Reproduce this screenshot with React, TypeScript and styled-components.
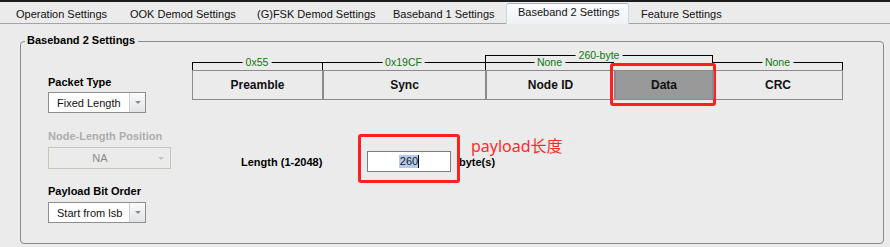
import React from "react";
import styled, { createGlobalStyle, css } from "styled-components";

const GlobalStyle = createGlobalStyle`
  html, body { margin: 0; padding: 0; background: #ebebeb; }
  body { font-family: "Liberation Sans", Arial, sans-serif; font-size: 11px; color: #000; }
  #root { width: 890px; height: 247px; overflow: hidden; }
  * { box-sizing: border-box; }
`;

const Page = styled.div`
  width: 890px;
  height: 247px;
  border-top: 2px solid #1c1c1c;
  display: flex;
  flex-direction: column;
  background: #ebebeb;
`;

const TabBar = styled.div`
  height: 22px;
  border-bottom: 1px solid #a3a3a3;
  display: flex;
  align-items: flex-end;
  padding-left: 4px;
`;

const Tab = styled.div<{ $w?: number; $active?: boolean }>`
  width: ${(p) => (p.$w ? `${p.$w}px` : "auto")};
  height: 21px;
  padding: 6px 0 0 12px;
  line-height: 13px;
  font-size: 11px;
  color: #111;
  white-space: nowrap;
  ${(p) =>
    p.$active &&
    css`
      height: 21px;
      margin-bottom: -1px;
      padding: 2px 0 0 11px;
      border: 1px solid #a9b2bb;
      border-left-color: #b4dfe8;
      border-right-color: #b4dfe8;
      border-bottom: none;
      border-radius: 3px 3px 0 0;
      background: linear-gradient(#fbfcfd, #eef1f6);
    `}
`;

const Group = styled.div`
  position: relative;
  margin: 17px 6px 0 20px;
  height: 203px;
  border: 1px solid #8a8a8a;
  border-radius: 4px;
`;

const GroupTitle = styled.div`
  position: absolute;
  top: -8px;
  left: 4px;
  padding: 0 3px 0 2px;
  background: #ebebeb;
  font-weight: bold;
  font-size: 11px;
  line-height: 13px;
`;

const Content = styled.div`
  display: flex;
  padding-left: 27px;
`;

const LeftCol = styled.div`
  width: 144px;
  display: flex;
  flex-direction: column;
`;

const FieldLabel = styled.div<{ $top: number; $disabled?: boolean }>`
  margin-top: ${(p) => p.$top}px;
  font-weight: bold;
  font-size: 11px;
  line-height: 13px;
  color: ${(p) => (p.$disabled ? "#adadad" : "#000")};
  white-space: nowrap;
`;

const SelectBox = styled.div<{ $w: number; $h: number; $top: number; $disabled?: boolean }>`
  margin-top: ${(p) => p.$top}px;
  width: ${(p) => p.$w}px;
  height: ${(p) => p.$h}px;
  display: flex;
  border: 1px solid ${(p) => (p.$disabled ? "#c3c6b3" : "#8e8e8e")};
  background: ${(p) => (p.$disabled ? "#ebebeb" : "#fff")};
`;

const SelectText = styled.div<{ $disabled?: boolean }>`
  flex: 1;
  display: flex;
  align-items: center;
  justify-content: ${(p) => (p.$disabled ? "center" : "flex-start")};
  padding-left: ${(p) => (p.$disabled ? 0 : 8)}px;
  font-size: 11px;
  color: ${(p) => (p.$disabled ? "#8a8a8a" : "#111")};
  white-space: nowrap;
`;

const SelectButton = styled.div<{ $w: number; $disabled?: boolean }>`
  width: ${(p) => p.$w}px;
  display: flex;
  align-items: center;
  justify-content: center;
  ${(p) =>
    p.$disabled
      ? css`
          background: transparent;
        `
      : css`
          border-left: 1px solid #cfcfcf;
          background: linear-gradient(#fbfbfc, #e1e3e8);
        `}
`;

const Arrow = styled.div<{ $disabled?: boolean }>`
  width: 0;
  height: 0;
  border-left: 3px solid transparent;
  border-right: 3px solid transparent;
  border-top: 3px solid ${(p) => (p.$disabled ? "#c4c4c4" : "#8a8a8a")};
`;

const RightCol = styled.div`
  display: flex;
  flex-direction: column;
`;

const BracketRow = styled.div<{ $top: number; $h: number; $after: number }>`
  display: flex;
  margin-top: ${(p) => p.$top}px;
  height: ${(p) => p.$h}px;
  margin-bottom: ${(p) => p.$after}px;
`;

const BracketBox = styled.div<{ $w: number }>`
  position: relative;
  width: ${(p) => p.$w}px;
  flex-shrink: 0;
`;

const BracketFrame = styled.div<{ $h: number; $l?: boolean; $r?: boolean }>`
  margin-top: 6px;
  height: ${(p) => p.$h}px;
  border-top: 1px solid #000;
  border-left: ${(p) => (p.$l ? "1px solid #000" : "none")};
  border-right: ${(p) => (p.$r ? "1px solid #000" : "none")};
`;

const BracketLabel = styled.div`
  position: absolute;
  top: 0;
  left: 50%;
  transform: translateX(-50%);
  padding: 0 3px;
  background: #ebebeb;
  color: #0b780b;
  font-size: 10.5px;
  line-height: 12px;
  white-space: nowrap;
`;

const CellRow = styled.div`
  display: flex;
  width: 651px;
  height: 30px;
  border: 1px solid #8a8a8a;
`;

const Cell = styled.div<{ $w: number; $first?: boolean; $active?: boolean }>`
  position: relative;
  width: ${(p) => p.$w}px;
  display: flex;
  align-items: center;
  justify-content: center;
  border-left: ${(p) => (p.$first ? "none" : "2px solid #8a8a8a")};
  background: ${(p) => (p.$active ? "#999999" : "transparent")};
  font-weight: bold;
  font-size: 12px;
  color: #111;
`;

const RedBox = styled.div<{ $t: number; $l: number; $r: number; $b: number }>`
  position: absolute;
  top: ${(p) => p.$t}px;
  left: ${(p) => p.$l}px;
  right: ${(p) => p.$r}px;
  bottom: ${(p) => p.$b}px;
  border: 3px solid #ff1f1f;
  border-radius: 3px;
  pointer-events: none;
`;

const LengthRow = styled.div`
  display: flex;
  align-items: center;
  margin-top: 51px;
  padding-left: 49px;
  height: 21px;
`;

const LengthLabel = styled.div`
  width: 126px;
  font-weight: bold;
  font-size: 11px;
`;

const InputWrap = styled.div`
  position: relative;
  width: 84px;
  height: 21px;
`;

const TextField = styled.div`
  width: 100%;
  height: 100%;
  border: 1px solid #7d7d7d;
  background: #fff;
  display: flex;
  align-items: center;
  justify-content: center;
  font-size: 11px;
`;

const Selected = styled.span`
  background: #b5caea;
  color: #1a1a1a;
  line-height: 13px;
  padding: 0 0 0 1px;
`;

const Caret = styled.span`
  display: inline-block;
  width: 1px;
  height: 13px;
  background: #000;
`;

const Unit = styled.div`
  margin-left: 8px;
  font-weight: bold;
  font-size: 11px;
`;

const Annotation = styled.div`
  position: absolute;
  left: 104px;
  top: -14px;
  font-family: "Noto Sans", "Noto Sans CJK SC", sans-serif;
  font-size: 16px;
  line-height: 18px;
  color: #ff2b2b;
  white-space: nowrap;
`;

type SelectProps = { value: string; w: number; h: number; top: number; btn: number; disabled?: boolean };

function Select({ value, w, h, top, btn, disabled }: SelectProps) {
  return (
    <SelectBox $w={w} $h={h} $top={top} $disabled={disabled}>
      <SelectText $disabled={disabled}>{value}</SelectText>
      <SelectButton $w={btn} $disabled={disabled}>
        <Arrow $disabled={disabled} />
      </SelectButton>
    </SelectBox>
  );
}

type BracketProps = { w: number; h: number; label?: string; l?: boolean; r?: boolean; empty?: boolean };

function Bracket({ w, h, label, l, r, empty }: BracketProps) {
  return (
    <BracketBox $w={w}>
      {!empty && <BracketFrame $h={h} $l={l} $r={r} />}
      {label && <BracketLabel>{label}</BracketLabel>}
    </BracketBox>
  );
}

const tabs = [
  { label: "Operation Settings", w: 114 },
  { label: "OOK Demod Settings", w: 127 },
  { label: "(G)FSK Demod Settings", w: 136 },
  { label: "Baseband 1 Settings", w: 125 },
  { label: "Baseband 2 Settings", w: 123, active: true },
  { label: "Feature Settings", w: 120 },
];

const cells = [
  { label: "Preamble", w: 129 },
  { label: "Sync", w: 163 },
  { label: "Node ID", w: 129 },
  { label: "Data", w: 98, active: true },
  { label: "CRC", w: 130 },
];

export default function App() {
  return (
    <>
      <GlobalStyle />
      <Page>
        <TabBar>
          {tabs.map((t) => (
            <Tab key={t.label} $w={t.w} $active={t.active}>
              {t.label}
            </Tab>
          ))}
        </TabBar>
        <Group>
          <GroupTitle>Baseband 2 Settings</GroupTitle>
          <Content>
            <LeftCol>
              <FieldLabel $top={34}>Packet Type</FieldLabel>
              <Select value="Fixed Length" w={98} h={21} top={3} btn={16} />
              <FieldLabel $top={17} $disabled>
                Node-Length Position
              </FieldLabel>
              <Select value="NA" w={123} h={22} top={4} btn={19} disabled />
              <FieldLabel $top={16}>Payload Bit Order</FieldLabel>
              <Select value="Start from lsb" w={98} h={21} top={4} btn={16} />
            </LeftCol>
            <RightCol>
              <BracketRow $top={7} $h={13} $after={-6}>
                <Bracket w={293} h={0} empty />
                <Bracket w={228} h={7} label="260-byte" l r />
              </BracketRow>
              <BracketRow $top={0} $h={14} $after={0}>
                <Bracket w={130} h={8} label="0x55" l />
                <Bracket w={163} h={8} label="0x19CF" l />
                <Bracket w={129} h={8} label="None" l />
                <Bracket w={98} h={0} empty />
                <Bracket w={131} h={8} label="None" r />
              </BracketRow>
              <CellRow>
                {cells.map((c, i) => (
                  <Cell key={c.label} $w={c.w} $first={i === 0} $active={c.active}>
                    {c.label}
                    {c.active && <RedBox $t={-8} $l={-6} $r={-4} $b={-7} />}
                  </Cell>
                ))}
              </CellRow>
              <LengthRow>
                <LengthLabel>Length (1-2048)</LengthLabel>
                <InputWrap>
                  <TextField>
                    <Selected>260</Selected>
                    <Caret />
                  </TextField>
                  <RedBox $t={-17} $l={-9} $r={-9} $b={-11} />
                  <Annotation>payload长度</Annotation>
                </InputWrap>
                <Unit>byte(s)</Unit>
              </LengthRow>
            </RightCol>
          </Content>
        </Group>
      </Page>
    </>
  );
}
